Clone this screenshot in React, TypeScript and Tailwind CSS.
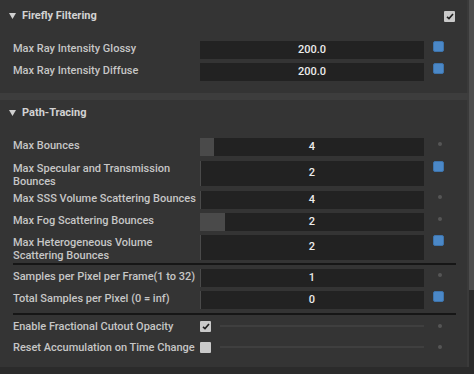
import React from 'react';

type Mark = 'blue' | 'dot';

type NumRow = {
  label: string;
  value: string;
  mark: Mark;
  fill?: number;
  tall?: boolean;
  mt?: string;
};

function Triangle() {
  return (
    <svg width="7" height="6" viewBox="0 0 7 6" className="shrink-0">
      <path d="M0 0 L7 0 L3.5 6 Z" fill="#d0d0d0" />
    </svg>
  );
}

function Indicator({ mark }: { mark: Mark }) {
  if (mark === 'blue') {
    return (
      <div className="ml-[9px] mt-[0px] w-[11px] h-[11px] rounded-[2px] bg-[#4b88c7] border border-[#3d73ab]" />
    );
  }
  return <div className="ml-[14px] mt-[4px] w-[4px] h-[4px] rounded-full bg-[#555555]" />;
}

function NumberRow({ row }: { row: NumRow }) {
  return (
    <div className={`flex items-start ${row.tall ? 'h-[25px]' : 'h-[18px]'} ${row.mt ?? ''}`}>
      <div className="w-[187px] shrink-0 pr-[2px] text-[11px] leading-[13px] font-medium text-[#c6c6c6] pt-[0.5px]">
        {row.label}
      </div>
      <div className="relative w-[224px] h-full shrink-0 bg-[#222222] flex items-center justify-center">
        {row.fill ? (
          <div className="absolute left-0 top-0 bottom-0 bg-[#4a4a4a]" style={{ width: row.fill }} />
        ) : null}
        <span className="relative text-[11px] font-medium text-[#ececec]">{row.value}</span>
      </div>
      <Indicator mark={row.mark} />
    </div>
  );
}

function CheckBox({ checked }: { checked: boolean }) {
  return (
    <div className="w-[11px] h-[11px] rounded-[1px] bg-[#c9c9c9] flex items-center justify-center shrink-0">
      {checked && (
        <svg width="8" height="7" viewBox="0 0 8 7">
          <path d="M1 3.8 L3 5.6 L7 1" stroke="#1e1e1e" strokeWidth="1.6" fill="none" />
        </svg>
      )}
    </div>
  );
}

function CheckRow({ label, checked, mt }: { label: string; checked: boolean; mt: string }) {
  return (
    <div className={`flex items-center h-[18px] ${mt}`}>
      <div className="w-[187px] shrink-0 text-[11px] leading-[13px] font-medium text-[#c6c6c6]">{label}</div>
      <CheckBox checked={checked} />
      <div className="ml-[9px] w-[204px] h-[2px] bg-[#3f3f3f]" />
      <div className="ml-[14px] w-[4px] h-[4px] rounded-full bg-[#555555]" />
    </div>
  );
}

function Header({ title, check }: { title: string; check?: boolean }) {
  return (
    <div className="flex items-center h-[26px] pl-[9px] pr-[12px]">
      <Triangle />
      <span className="ml-[6px] text-[11px] font-bold text-[#d2d2d2]">{title}</span>
      {check && (
        <div className="ml-auto">
          <CheckBox checked />
        </div>
      )}
    </div>
  );
}

const pathRows: NumRow[] = [
  { label: 'Max Bounces', value: '4', mark: 'dot', fill: 14 },
  { label: 'Max Specular and Transmission Bounces', value: '2', mark: 'blue', tall: true, fill: 1, mt: 'mt-[5px]' },
  { label: 'Max SSS Volume Scattering Bounces', value: '4', mark: 'dot', fill: 1, mt: 'mt-[5px]' },
  { label: 'Max Fog Scattering Bounces', value: '2', mark: 'dot', fill: 25, mt: 'mt-[4px]' },
  { label: 'Max Heterogeneous Volume Scattering Bounces', value: '2', mark: 'blue', tall: true, fill: 1, mt: 'mt-[4px]' },
];

const sampleRows: NumRow[] = [
  { label: 'Samples per Pixel per Frame(1 to 32)', value: '1', mark: 'dot', fill: 1, mt: 'mt-[4px]' },
  { label: 'Total Samples per Pixel (0 = inf)', value: '0', mark: 'blue', fill: 1, mt: 'mt-[4px]' },
];

export default function App() {
  return (
    <div
      className="w-[474px] h-[374px] bg-[#2b2b2b] flex overflow-hidden"
      style={{ fontFamily: 'Roboto, "Noto Sans", sans-serif' }}
    >
      <div className="w-[469px] flex flex-col">
        {/* Firefly Filtering */}
        <section className="bg-[#343434] pt-[3px] pb-[12px] border-r-2 border-[#3a3a3a]">
          <Header title="Firefly Filtering" check />
          <div className="pl-[13px] pt-[12px] flex flex-col">
            <NumberRow row={{ label: 'Max Ray Intensity Glossy', value: '200.0', mark: 'blue' }} />
            <NumberRow row={{ label: 'Max Ray Intensity Diffuse', value: '200.0', mark: 'blue', mt: 'mt-[4px]' }} />
          </div>
        </section>

        <div className="h-[7px] bg-[#3d3d3d]" />

        {/* Path-Tracing */}
        <section className="bg-[#343434] pb-[11px] border-r-2 border-[#3a3a3a]">
          <Header title="Path-Tracing" />
          <div className="pl-[13px] pt-[12px] flex flex-col">
            {pathRows.map(r => (
              <NumberRow key={r.label} row={r} />
            ))}
            <div className="mt-[3px] w-[443px] h-[2px] bg-[#161616]" />
            {sampleRows.map(r => (
              <NumberRow key={r.label} row={r} />
            ))}
            <div className="mt-[4px] w-[443px] h-[2px] bg-[#161616]" />
            <CheckRow label="Enable Fractional Cutout Opacity" checked mt="mt-[2px]" />
            <CheckRow label="Reset Accumulation on Time Change" checked={false} mt="mt-[3px]" />
          </div>
        </section>
      </div>

      {/* scrollbar */}
      <div className="w-[5px] flex flex-col">
        <div className="h-[290px] bg-[#4e4e4e]" />
      </div>
    </div>
  );
}
